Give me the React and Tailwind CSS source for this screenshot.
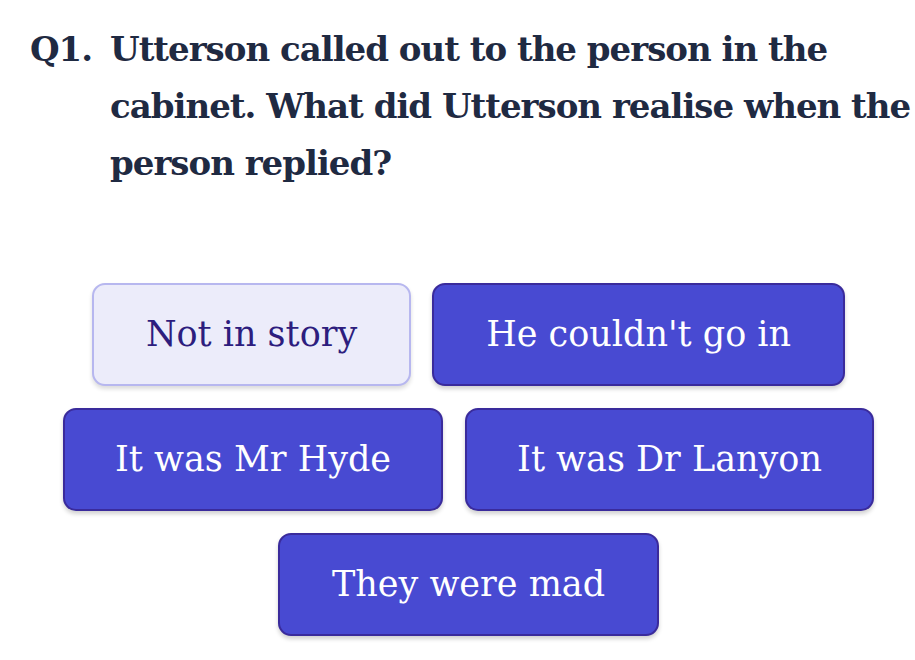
export default function App() {
  const serif = { fontFamily: '"DejaVu Serif", "Liberation Serif", serif' };
  const base =
    "h-[103px] rounded-[13px] border-2 text-[35px] flex items-center justify-center whitespace-nowrap";
  const dark = "border-[#3a2b9c] bg-[#484ad2] text-white shadow-[0_3px_4px_rgba(0,0,0,0.18)]";
  const light = "border-[#b7b7ef] bg-[#ececfa] text-[#2d1d7e] shadow-[0_3px_4px_rgba(0,0,0,0.14)]";
  return (
    <div className="w-[915px] h-[660px] bg-white overflow-hidden" style={serif}>
      <div className="flex pl-[30px] pt-[21px] text-[#1f2a42] font-bold text-[34px] leading-[57px] tracking-[-1px]">
        <div className="w-[80px] shrink-0">Q1.</div>
        <div className="flex flex-col whitespace-nowrap">
          <span>Utterson called out to the person in the</span>
          <span>cabinet. What did Utterson realise when the</span>
          <span>person replied?</span>
        </div>
      </div>
      <div className="mt-[91px] pl-[22px] flex flex-col items-center gap-[22px]">
        <div className="flex gap-[21px]">
          <div className={`${base} ${light} px-[52px]`}>Not in story</div>
          <div className={`${base} ${dark} px-[52px]`}>He couldn't go in</div>
        </div>
        <div className="flex gap-[22px]">
          <div className={`${base} ${dark} px-[50px]`}>It was Mr Hyde</div>
          <div className={`${base} ${dark} px-[50px]`}>It was Dr Lanyon</div>
        </div>
        <div className="flex">
          <div className={`${base} ${dark} px-[52px]`}>They were mad</div>
        </div>
      </div>
    </div>
  );
}
